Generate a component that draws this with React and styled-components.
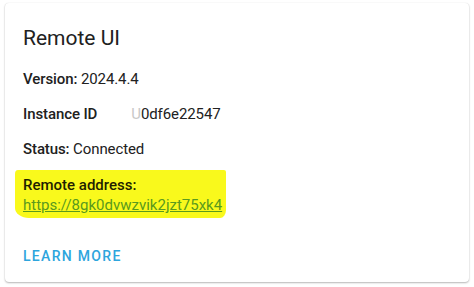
import React from "react";
import styled, { createGlobalStyle } from "styled-components";

const Global = createGlobalStyle`
  html, body {
    margin: 0;
    background: #ffffff;
    font-family: Roboto, "Noto Sans", sans-serif;
    color: #212121;
  }
`;

const Page = styled.div`
  padding: 3px 5px 5px 5px;
`;

const Card = styled.div`
  width: 464px;
  height: 279px;
  box-sizing: border-box;
  background: #fff;
  border-radius: 4px;
  box-shadow: 0 1px 2px rgba(0, 0, 0, 0.28), 0 0 1px rgba(0, 0, 0, 0.12);
  display: flex;
  flex-direction: column;
`;

const Content = styled.div`
  padding: 21px 18px 0 18px;
  flex: 1;
`;

const Title = styled.h1`
  margin: 0 0 17px 0;
  font-size: 21px;
  font-weight: 400;
  line-height: 28px;
  color: #212121;
`;

const Row = styled.p`
  margin: 0 0 15px 0;
  font-size: 15px;
  line-height: 20px;
  letter-spacing: -0.1px;
`;

const Label = styled.b`
  font-weight: 500;
`;

const Hidden = styled.span`
  display: inline-block;
  width: ${(p) => p.$w}px;
`;

const Faded = styled.span`
  color: #c8c8c8;
`;

const Highlight = styled.div`
  margin: -4px 0 0 -8px;
  width: 203px;
  padding: 5px 0 3px 8px;
  background: #f9f91c;
  border-radius: 3px 2px 6px 14px / 4px 2px 8px 10px;
`;

const Address = styled.p`
  margin: 0;
  font-size: 15px;
  line-height: 20px;
  color: #1f1f00;
`;

const Link = styled.a`
  color: #5a9a1e;
  text-decoration: underline;
`;

const Actions = styled.div`
  padding: 0 18px 16px 18px;
  line-height: 20px;
`;

const Button = styled.span`
  display: inline-block;
  font-size: 14px;
  font-weight: 500;
  letter-spacing: 1.3px;
  color: #2ea5dd;
  text-transform: uppercase;
`;

export default function App() {
  return (
    <>
      <Global />
      <Page>
        <Card>
          <Content>
            <Title>Remote UI</Title>
            <Row>
              <Label>Version:</Label> 2024.4.4
            </Row>
            <Row>
              <Label>Instance ID</Label>
              <Hidden $w={34} />
              <Faded>U</Faded>0df6e22547
            </Row>
            <Row>
              <Label>Status:</Label> Connected
            </Row>
            <Highlight>
              <Address>
                <Label>Remote address:</Label>
              </Address>
              <Address>
                <Link href="#">https://8gk0dvwzvik2jzt75xk4</Link>
              </Address>
            </Highlight>
          </Content>
          <Actions>
            <Button>Learn more</Button>
          </Actions>
        </Card>
      </Page>
    </>
  );
}
